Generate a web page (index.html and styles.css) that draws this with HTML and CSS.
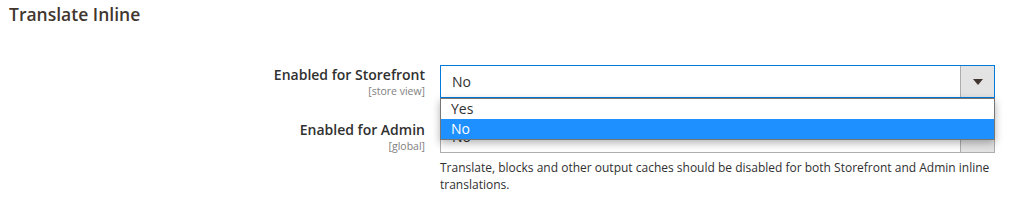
FILE: index.html
```html
<!DOCTYPE html>
<html>
<head>
<meta charset="utf-8">
<link rel="stylesheet" href="styles.css">
</head>
<body>
<div class="page">
  <h2 class="title">Translate Inline</h2>
  <div class="fields">
    <div class="row">
      <div class="label">
        <span class="label-text">Enabled for Storefront</span>
        <span class="scope">[store view]</span>
      </div>
      <div class="control">
        <div class="select focused">
          <span class="value">No</span>
          <span class="arrow"><span class="tri"></span></span>
        </div>
        <ul class="menu">
          <li class="option">Yes</li>
          <li class="option selected">No</li>
        </ul>
      </div>
    </div>
    <div class="row row2">
      <div class="label">
        <span class="label-text">Enabled for Admin</span>
        <span class="scope">[global]</span>
      </div>
      <div class="control">
        <div class="select">
          <span class="value">No</span>
          <span class="arrow"><span class="tri"></span></span>
        </div>
        <p class="note">Translate, blocks and other output caches should be disabled for both Storefront and Admin inline translations.</p>
      </div>
    </div>
  </div>
</div>
</body>
</html>
```
FILE: styles.css
```css
* { box-sizing: border-box; }
html, body { margin: 0; padding: 0; background: #fff; }
body {
  font-family: "Open Sans", "Noto Sans", sans-serif;
  color: #303030;
  width: 1016px;
  height: 206px;
  overflow: hidden;
}
.page { padding: 0 21px 0 9px; }
.title {
  margin: 0;
  padding-top: 3px;
  font-size: 17.5px;
  font-weight: 600;
  line-height: 22px;
  color: #41362f;
}
.fields { padding-top: 40px; }
.row {
  display: grid;
  grid-template-columns: 431px 555px;
}
.row2 { margin-top: 22px; }
.label {
  display: flex;
  flex-direction: column;
  align-items: flex-end;
  padding-right: 15px;
}
.label-text {
  font-size: 14px;
  font-weight: 600;
  line-height: 20px;
  color: #303030;
}
.scope {
  font-size: 10.5px;
  line-height: 13px;
  color: #808080;
}
.control { position: relative; }
.select {
  height: 33px;
  border: 1px solid #adadad;
  display: flex;
  align-items: center;
  background: #fff;
}
.select.focused { border-color: #007bdb; }
.value {
  flex: 1;
  padding-left: 11px;
  font-size: 14px;
  color: #303030;
}
.arrow {
  width: 34px;
  align-self: stretch;
  background: #e3e3e3;
  border-left: 1px solid #adadad;
  display: flex;
  align-items: center;
  justify-content: center;
}
.tri {
  width: 0;
  height: 0;
  border-left: 5px solid transparent;
  border-right: 5px solid transparent;
  border-top: 6px solid #41362f;
}
.menu {
  position: absolute;
  left: 0;
  right: 0;
  top: 33px;
  margin: 0;
  padding: 0;
  list-style: none;
  background: #fff;
  border: 1px solid #767676;
  box-shadow: 0 3px 8px rgba(0,0,0,0.3);
  z-index: 2;
}
.option {
  height: 20px;
  line-height: 20px;
  padding-left: 10px;
  font-size: 14px;
  color: #303030;
}
.option.selected { background: #1e90ff; color: #fff; }
.note {
  margin: 6px 0 0;
  font-size: 12px;
  line-height: 17px;
  color: #303030;
}
```
